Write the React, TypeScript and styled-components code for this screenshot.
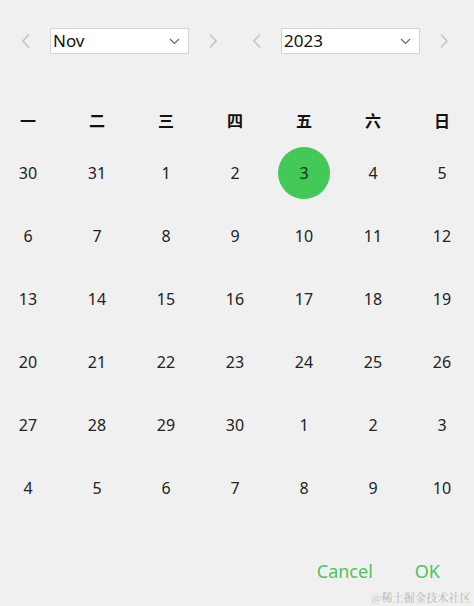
import React from 'react';
import styled, { createGlobalStyle } from 'styled-components';

const GlobalStyle = createGlobalStyle`
	html, body {
		margin: 0;
		padding: 0;
		background: #f0f0f0;
	}
	body {
		font-family: 'Noto Sans', 'Open Sans', 'Noto Sans CJK SC', sans-serif;
	}
`;

const WEEKDAYS = ['一', '二', '三', '四', '五', '六', '日'];

const DAYS = [
	30, 31, 1, 2, 3, 4, 5,
	6, 7, 8, 9, 10, 11, 12,
	13, 14, 15, 16, 17, 18, 19,
	20, 21, 22, 23, 24, 25, 26,
	27, 28, 29, 30, 1, 2, 3,
	4, 5, 6, 7, 8, 9, 10,
];

const SELECTED_INDEX = 4;

function Chevron({ dir }: { dir: 'left' | 'right' }) {
	return (
		<svg width='10' height='16' viewBox='0 0 10 16'>
			<path
				d={dir === 'left' ? 'M8 1.5 L2 8 L8 14.5' : 'M2 1.5 L8 8 L2 14.5'}
				fill='none'
				stroke='#c4c4c4'
				strokeWidth='1.6'
			/>
		</svg>
	);
}

function Picker({ value }: { value: string }) {
	return (
		<PickerGroup>
			<NavButton>
				<Chevron dir='left' />
			</NavButton>
			<Select>
				<SelectValue>{value}</SelectValue>
				<svg width='11' height='7' viewBox='0 0 11 7'>
					<path d='M1 1 L5.5 5.5 L10 1' fill='none' stroke='#666' strokeWidth='1.1' />
				</svg>
			</Select>
			<NavButton>
				<Chevron dir='right' />
			</NavButton>
		</PickerGroup>
	);
}

export default function App() {
	return (
		<>
			<GlobalStyle />
			<Page>
				<Toolbar>
					<Picker value='Nov' />
					<Picker value='2023' />
				</Toolbar>
				<WeekRow>
					{WEEKDAYS.map((d) => (
						<WeekDay key={d}>{d}</WeekDay>
					))}
				</WeekRow>
				<DayGrid>
					{DAYS.map((d, i) => (
						<DayCell key={i}>
							<Day $selected={i === SELECTED_INDEX}>{d}</Day>
						</DayCell>
					))}
				</DayGrid>
				<Footer>
					<TextButton>Cancel</TextButton>
					<TextButton>OK</TextButton>
				</Footer>
				<Watermark>@稀土掘金技术社区</Watermark>
			</Page>
		</>
	);
}

const Page = styled.div`
	position: relative;
	width: 474px;
	height: 606px;
	overflow: hidden;
	background: #f0f0f0;
`;

const Toolbar = styled.div`
	display: flex;
	gap: 20px;
	padding: 28px 0 0 14px;
`;

const PickerGroup = styled.div`
	display: flex;
	align-items: center;
	gap: 12px;
`;

const NavButton = styled.div`
	width: 24px;
	height: 26px;
	display: flex;
	align-items: center;
	justify-content: center;
`;

const Select = styled.div`
	box-sizing: border-box;
	width: 139px;
	height: 26px;
	background: #ffffff;
	border: 1px solid #d4d4d4;
	display: flex;
	align-items: center;
	justify-content: space-between;
	padding: 0 8px 0 2px;
`;

const SelectValue = styled.span`
	font-size: 17px;
	color: #111;
	line-height: 24px;
`;

const WeekRow = styled.div`
	display: grid;
	grid-template-columns: repeat(7, 40px);
	justify-content: space-between;
	padding: 0 12px 0 8px;
	margin-top: 45px;
	height: 42px;
	align-items: center;
`;

const WeekDay = styled.div`
	text-align: center;
	font-family: 'Noto Sans CJK SC', sans-serif;
	font-weight: 700;
	font-size: 16px;
	color: #111;
`;

const DayGrid = styled.div`
	display: grid;
	grid-template-columns: repeat(7, 40px);
	grid-auto-rows: 63px;
	justify-content: space-between;
	padding: 0 12px 0 8px;
`;

const DayCell = styled.div`
	display: flex;
	align-items: center;
	justify-content: center;
`;

const Day = styled.div<{ $selected?: boolean }>`
	flex: none;
	width: 52px;
	height: 52px;
	border-radius: 50%;
	display: flex;
	align-items: center;
	justify-content: center;
	font-size: 16px;
	color: ${(p) => (p.$selected ? '#123012' : '#222')};
	background: ${(p) => (p.$selected ? '#44c857' : 'transparent')};
`;

const Footer = styled.div`
	display: flex;
	justify-content: flex-end;
	gap: 42px;
	padding: 38px 34px 0 0;
`;

const TextButton = styled.span`
	font-size: 18px;
	color: #4cc45c;
	line-height: 28px;
`;

const Watermark = styled.div`
	position: absolute;
	right: 3px;
	bottom: 1px;
	font-family: 'Noto Serif CJK SC', 'Noto Sans CJK SC', serif;
	font-size: 11px;
	color: #b4b4b4;
	letter-spacing: 0.2px;
`;
